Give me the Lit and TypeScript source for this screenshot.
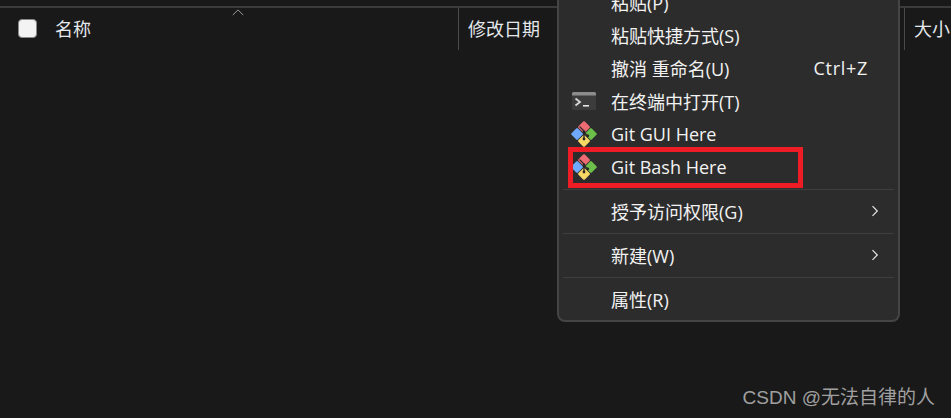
import { LitElement, html, css } from "lit";
import { customElement } from "lit/decorators.js";

const gitIcon = html`<svg width="26" height="26" viewBox="0 0 26 26">
  <g transform="rotate(45 13 13)">
    <rect x="3.6" y="3.6" width="9" height="9" rx="1.2" fill="#ee6b73"/>
    <rect x="13.4" y="3.6" width="9" height="9" rx="1.2" fill="#6cc04a"/>
    <rect x="3.6" y="13.4" width="9" height="9" rx="1.2" fill="#6ea8ff"/>
    <rect x="13.4" y="13.4" width="9" height="9" rx="1.2" fill="#f7d864"/>
  </g>
  <path d="M8.6 5.6 13 10v8M13 11.5l3.6 3.2" fill="none" stroke="#2b2426" stroke-width="1.3"/>
  <circle cx="13" cy="11" r="1.4" fill="#2b2426"/>
  <circle cx="13" cy="18" r="1.4" fill="#2b2426"/>
  <circle cx="16.8" cy="14.8" r="1.4" fill="#2b2426"/>
</svg>`;

const termIcon = html`<svg width="24" height="18" viewBox="0 0 24 18">
  <rect width="24" height="18" rx="1.5" fill="#3c3c3c"/>
  <path d="M0 1.5A1.5 1.5 0 0 1 1.5 0h21A1.5 1.5 0 0 1 24 1.5V3.5H0z" fill="#8c8c8c"/>
  <path d="M3.5 6.5 8 10l-4.5 3.5" fill="none" stroke="#d8d8d8" stroke-width="1.8"/>
  <rect x="11" y="13" width="6" height="1.6" fill="#e6e6e6"/>
</svg>`;

const chevron = html`<svg width="8" height="12" viewBox="0 0 8 12"><path d="M1.5 1.2 6.3 6l-4.8 4.8" fill="none" stroke="#e4e4e4" stroke-width="1.2"/></svg>`;

const caret = html`<svg width="12" height="7" viewBox="0 0 12 7"><path d="M.8 6 6 .9 11.2 6" fill="none" stroke="#9a9a9a" stroke-width="1"/></svg>`;

type Item = { label: string; icon?: unknown; key?: string; sub?: boolean; sep?: boolean };

const items: Item[] = [
  { label: "粘贴(P)" },
  { label: "粘贴快捷方式(S)" },
  { label: "撤消 重命名(U)", key: "Ctrl+Z" },
  { label: "在终端中打开(T)", icon: termIcon },
  { label: "Git GUI Here", icon: gitIcon },
  { label: "Git Bash Here", icon: gitIcon },
  { sep: true, label: "" },
  { label: "授予访问权限(G)", sub: true },
  { sep: true, label: "" },
  { label: "新建(W)", sub: true },
  { sep: true, label: "" },
  { label: "属性(R)" },
];

@customElement("app-root")
export class AppRoot extends LitElement {
  static styles = css`
    :host {
      display: block;
      position: relative;
      width: 951px;
      height: 418px;
      overflow: hidden;
      background: #191919;
      font-family: "Open Sans", "Noto Sans CJK SC", sans-serif;
      color: #f2f2f2;
    }
    .topline { height: 2px; margin-top: 6px; background: #3b3b3b; }
    .header {
      display: grid;
      grid-template-columns: 458px 446px 1fr;
      height: 42px;
      font-size: 18px;
      color: #e4e8ec;
    }
    .col { position: relative; display: flex; align-items: center; padding-bottom: 2px; box-sizing: border-box; }
    .col + .col { border-left: 1px solid #4a4a4a; padding-left: 9px; }
    .name { padding-left: 18px; gap: 18px; }
    .check {
      width: 19px; height: 19px; box-sizing: border-box; border-radius: 4px;
      background: #f3f3f3; border: 1px solid #8a8a8a;
    }
    .caret { position: absolute; left: 232px; top: 1px; line-height: 0; }
    .menu {
      position: absolute;
      left: 557px; top: -15px;
      width: 343px; height: 337px;
      box-sizing: border-box;
      background: #2c2c2c;
      border: 2px solid #454545;
      border-top: none;
      border-radius: 0 0 8px 8px;
      padding: 0 4px;
      font-size: 18px;
    }
    .row {
      display: grid;
      grid-template-columns: 48px 1fr auto;
      align-items: center;
      height: 33px;
      white-space: nowrap;
    }
    .icon { display: flex; justify-content: center; align-items: center; width: 42px; margin-top: 1px; }
    .key { padding-right: 26px; letter-spacing: 0.7px; }
    .arrow { display: flex; padding-right: 15px; }
    .sep-wrap { height: 11px; padding-top: 6px; box-sizing: border-box; }
    .sep { height: 1px; background: #3f3f3f; }
    .hl {
      position: absolute; left: 9px; top: 162px; width: 235px; height: 41px;
      box-sizing: border-box; border: 5px solid #ee1c25; pointer-events: none;
    }
    .mark {
      position: absolute; right: 16px; bottom: 9px;
      font-family: "Liberation Sans", "Noto Sans CJK SC", sans-serif;
      font-size: 19px; color: #a0a0a0;
    }
  `;

  render() {
    return html`
      <div class="topline"></div>
      <div class="header">
        <div class="col name"><span class="check"></span><span>名称</span><span class="caret">${caret}</span></div>
        <div class="col">修改日期</div>
        <div class="col">大小</div>
      </div>
      <div class="menu">
        ${items.map((it) =>
          it.sep
            ? html`<div class="sep-wrap"><div class="sep"></div></div>`
            : html`<div class="row">
                <span class="icon">${it.icon ?? ""}</span>
                <span>${it.label}</span>
                ${it.key
                  ? html`<span class="key">${it.key}</span>`
                  : it.sub
                    ? html`<span class="arrow">${chevron}</span>`
                    : html`<span></span>`}
              </div>`
        )}
        <div class="hl"></div>
      </div>
      <div class="mark">CSDN @无法自律的人</div>
    `;
  }
}
